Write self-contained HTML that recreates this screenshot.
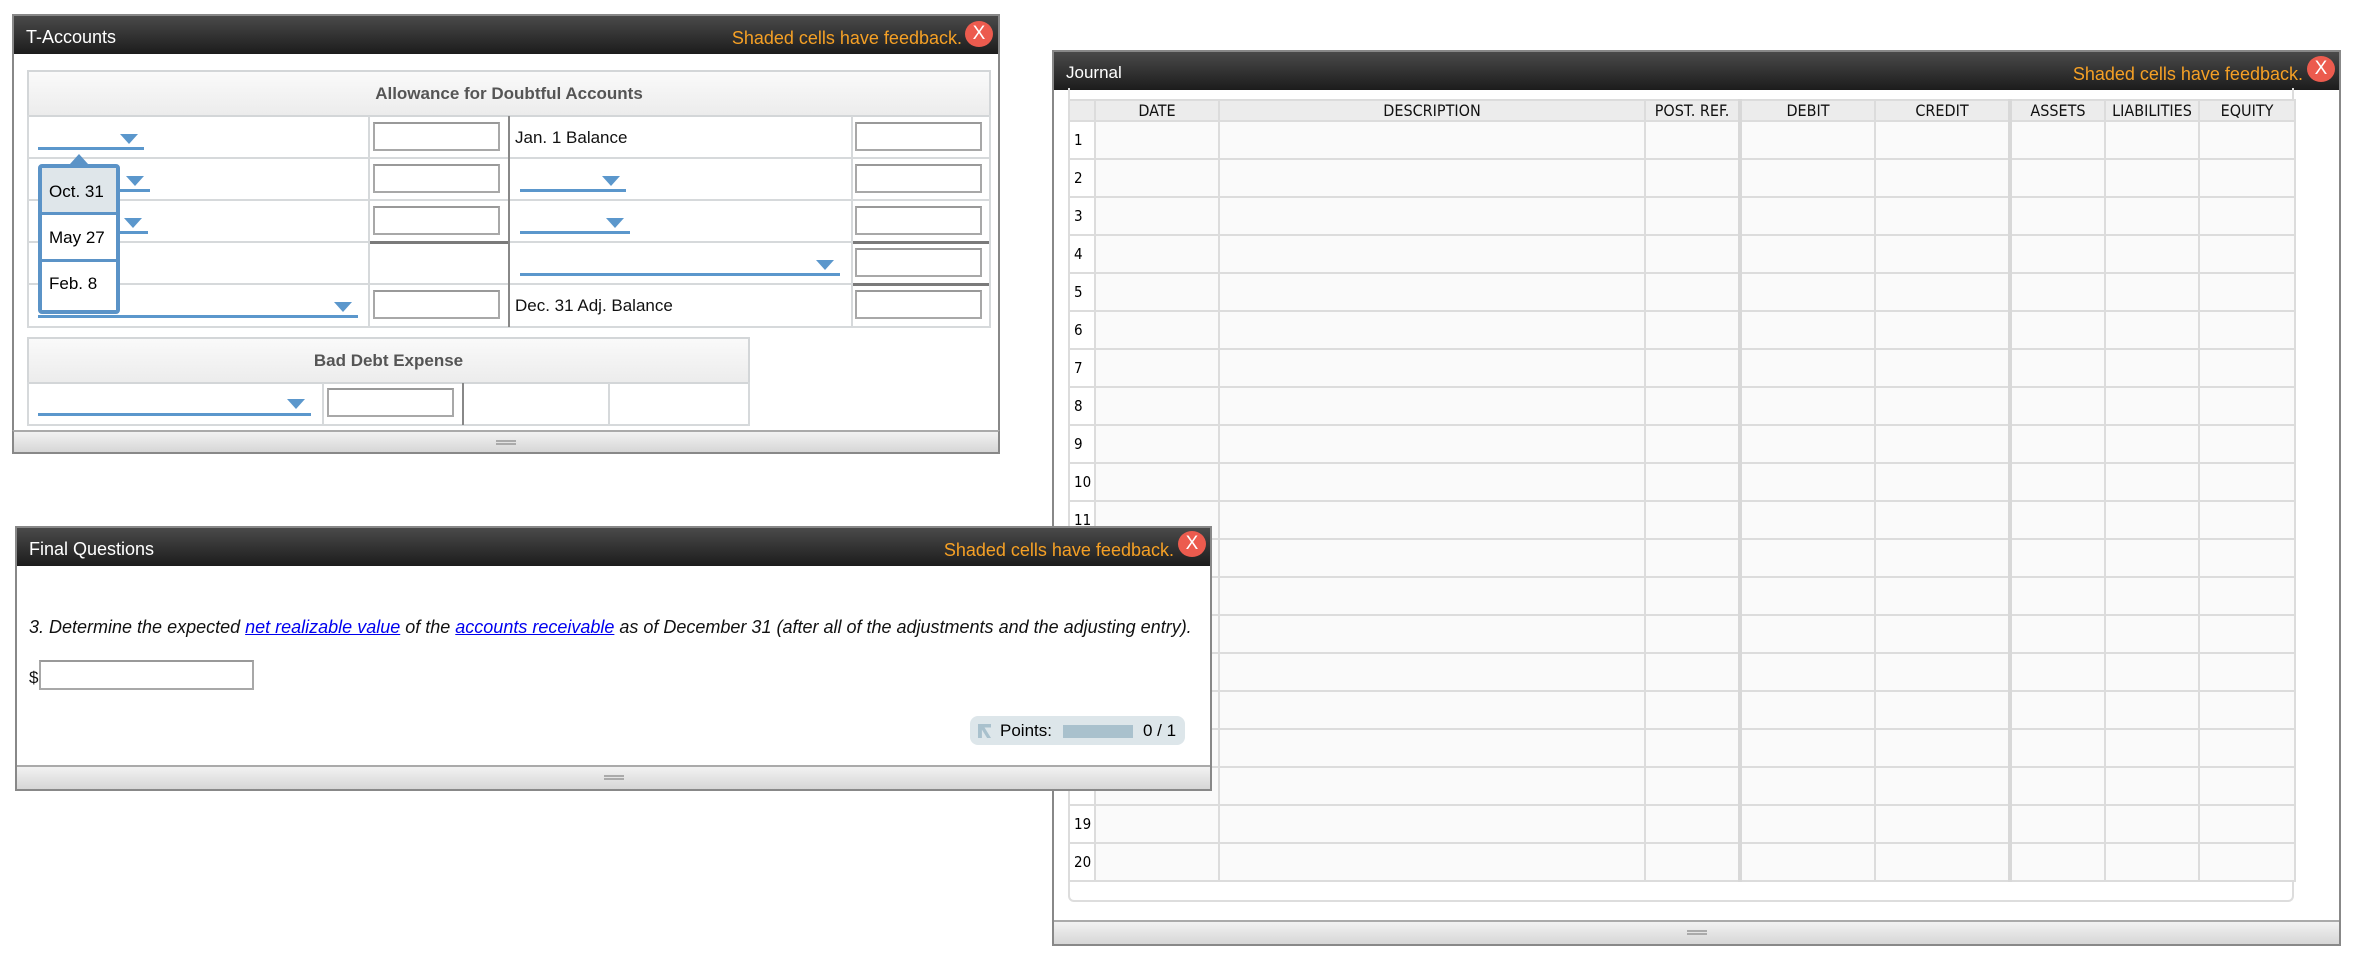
<!DOCTYPE html>
<html><head><meta charset="utf-8"><style>
*{box-sizing:border-box;margin:0;padding:0}
body{width:2356px;height:980px;background:#fff;position:relative;overflow:hidden;font-family:"Liberation Sans",Arial,sans-serif}
.win{position:absolute;background:#fff;border:2px solid #888}
.hdr{position:absolute;left:0;right:0;top:0;background:linear-gradient(#4a4a4a,#1c1c1c);color:#fff}
.hdr .t{position:absolute;left:12px;font-size:18px}
.hdr .fb{position:absolute;color:#f5a025;font-size:18px}
.x{position:absolute;width:28px;height:26px;border-radius:50%;background:#ec5b4e;color:#fff;font-size:19px;text-align:center;line-height:26px}
.ftr{position:absolute;left:0;right:0;bottom:0;background:linear-gradient(#f2f2f2,#d6d6d6);border-top:2px solid #aaa}
.grip{position:absolute;left:50%;width:20px;margin-left:-10px;height:5px;border-top:2px solid #aaa;border-bottom:2px solid #aaa}
.abs{position:absolute}
.inp{position:absolute;border:2px solid #a8a8a8;border-top-color:#999;background:#fff;height:29px}
.dd{position:absolute;height:3px;background:#5b97cc}
.arr{position:absolute;width:0;height:0;border-left:9px solid transparent;border-right:9px solid transparent;border-top:10px solid #5b97cc}
.cell{position:absolute;border:2px solid #d6d9db}
.th{position:absolute;background:linear-gradient(#fafafa,#ececec);border:2px solid #d3d6d8;color:#555;font-weight:bold;font-size:17px;text-align:center}
.txt{position:absolute;font-size:17px;color:#111}
table.j{position:absolute;border-collapse:collapse;font-family:"DejaVu Sans Condensed","Liberation Sans Narrow",sans-serif;font-size:15px;table-layout:fixed}
table.j td{border:2px solid #dcdcdc;background:#fafafa;height:38px;padding:0}
table.j tr.h td{background:#ececec;height:21px;text-align:center;color:#111;font-size:16px;line-height:17px}
table.j td.n{background:#fff;font-size:15px;padding-left:4px}
table.j td.tk{border-left:4px solid #d8d8d8}
</style></head><body>

<!-- Journal -->
<div class="win" style="left:1052px;top:50px;width:1289px;height:896px">
 <div class="hdr" style="height:38px"><span class="t" style="top:11px;font-size:17px">Journal</span><span class="fb" style="right:36px;top:12px">Shaded cells have feedback.</span><div class="x" style="right:4px;top:4px">X</div></div>
 <div class="abs" style="left:14px;top:36px;width:1226px;height:814px;border:2px solid #ddd;border-top:none;border-radius:0 0 6px 6px"></div>
 <table class="j" style="left:14px;top:47px;width:1226px">
  <colgroup><col style="width:26px"><col style="width:124px"><col style="width:426px"><col style="width:95px"><col style="width:135px"><col style="width:135px"><col style="width:95px"><col style="width:94px"><col style="width:96px"></colgroup>
  <tr class="h"><td></td><td>DATE</td><td>DESCRIPTION</td><td>POST. REF.</td><td class="tk">DEBIT</td><td>CREDIT</td><td class="tk">ASSETS</td><td>LIABILITIES</td><td>EQUITY</td></tr>
  <tr><td class="n">1</td><td></td><td></td><td></td><td class="tk"></td><td></td><td class="tk"></td><td></td><td></td></tr>
  <tr><td class="n">2</td><td></td><td></td><td></td><td class="tk"></td><td></td><td class="tk"></td><td></td><td></td></tr>
  <tr><td class="n">3</td><td></td><td></td><td></td><td class="tk"></td><td></td><td class="tk"></td><td></td><td></td></tr>
  <tr><td class="n">4</td><td></td><td></td><td></td><td class="tk"></td><td></td><td class="tk"></td><td></td><td></td></tr>
  <tr><td class="n">5</td><td></td><td></td><td></td><td class="tk"></td><td></td><td class="tk"></td><td></td><td></td></tr>
  <tr><td class="n">6</td><td></td><td></td><td></td><td class="tk"></td><td></td><td class="tk"></td><td></td><td></td></tr>
  <tr><td class="n">7</td><td></td><td></td><td></td><td class="tk"></td><td></td><td class="tk"></td><td></td><td></td></tr>
  <tr><td class="n">8</td><td></td><td></td><td></td><td class="tk"></td><td></td><td class="tk"></td><td></td><td></td></tr>
  <tr><td class="n">9</td><td></td><td></td><td></td><td class="tk"></td><td></td><td class="tk"></td><td></td><td></td></tr>
  <tr><td class="n">10</td><td></td><td></td><td></td><td class="tk"></td><td></td><td class="tk"></td><td></td><td></td></tr>
  <tr><td class="n">11</td><td></td><td></td><td></td><td class="tk"></td><td></td><td class="tk"></td><td></td><td></td></tr>
  <tr><td class="n">12</td><td></td><td></td><td></td><td class="tk"></td><td></td><td class="tk"></td><td></td><td></td></tr>
  <tr><td class="n">13</td><td></td><td></td><td></td><td class="tk"></td><td></td><td class="tk"></td><td></td><td></td></tr>
  <tr><td class="n">14</td><td></td><td></td><td></td><td class="tk"></td><td></td><td class="tk"></td><td></td><td></td></tr>
  <tr><td class="n">15</td><td></td><td></td><td></td><td class="tk"></td><td></td><td class="tk"></td><td></td><td></td></tr>
  <tr><td class="n">16</td><td></td><td></td><td></td><td class="tk"></td><td></td><td class="tk"></td><td></td><td></td></tr>
  <tr><td class="n">17</td><td></td><td></td><td></td><td class="tk"></td><td></td><td class="tk"></td><td></td><td></td></tr>
  <tr><td class="n">18</td><td></td><td></td><td></td><td class="tk"></td><td></td><td class="tk"></td><td></td><td></td></tr>
  <tr><td class="n">19</td><td></td><td></td><td></td><td class="tk"></td><td></td><td class="tk"></td><td></td><td></td></tr>
  <tr><td class="n">20</td><td></td><td></td><td></td><td class="tk"></td><td></td><td class="tk"></td><td></td><td></td></tr>
 </table>
 <div class="ftr" style="height:24px"><div class="grip" style="top:8px"></div></div>
</div>

<!-- T-Accounts -->
<div class="win" style="left:12px;top:14px;width:988px;height:440px">
 <div class="hdr" style="height:38px"><span class="t" style="top:11px">T-Accounts</span><span class="fb" style="right:36px;top:12px">Shaded cells have feedback.</span><div class="x" style="right:5px;top:5px">X</div></div>
</div>
<div class="th" style="left:27px;top:70px;width:964px;height:47px;line-height:43px">Allowance for Doubtful Accounts</div>
<div class="cell" style="left:27px;top:115px;width:964px;height:213px;border-top:none"></div>
<div class="abs" style="left:29px;top:157px;width:960px;height:2px;background:#d6d9db"></div>
<div class="abs" style="left:29px;top:199px;width:960px;height:2px;background:#d6d9db"></div>
<div class="abs" style="left:29px;top:241px;width:960px;height:2px;background:#d6d9db"></div>
<div class="abs" style="left:29px;top:283px;width:960px;height:2px;background:#d6d9db"></div>
<div class="abs" style="left:368px;top:116px;width:2px;height:211px;background:#d6d9db"></div>
<div class="abs" style="left:508px;top:116px;width:2px;height:211px;background:#888"></div>
<div class="abs" style="left:851px;top:116px;width:2px;height:211px;background:#d6d9db"></div>
<div class="abs" style="left:370px;top:241px;width:138px;height:3px;background:#7a7a7a"></div>
<div class="abs" style="left:853px;top:241px;width:136px;height:3px;background:#7a7a7a"></div>
<div class="abs" style="left:853px;top:283px;width:136px;height:3px;background:#7a7a7a"></div>
<div class="inp" style="left:373px;top:122px;width:127px"></div>
<div class="inp" style="left:373px;top:164px;width:127px"></div>
<div class="inp" style="left:373px;top:206px;width:127px"></div>
<div class="inp" style="left:373px;top:290px;width:127px"></div>
<div class="inp" style="left:855px;top:122px;width:127px"></div>
<div class="inp" style="left:855px;top:164px;width:127px"></div>
<div class="inp" style="left:855px;top:206px;width:127px"></div>
<div class="inp" style="left:855px;top:248px;width:127px"></div>
<div class="inp" style="left:855px;top:290px;width:127px"></div>
<div class="txt" style="left:515px;top:128px">Jan. 1 Balance</div>
<div class="txt" style="left:515px;top:296px">Dec. 31 Adj. Balance</div>
<div class="dd" style="left:38px;top:147px;width:106px"></div><div class="arr" style="left:120px;top:134px"></div>
<div class="dd" style="left:110px;top:189px;width:40px"></div><div class="arr" style="left:126px;top:176px"></div>
<div class="dd" style="left:110px;top:231px;width:38px"></div><div class="arr" style="left:124px;top:218px"></div>
<div class="dd" style="left:38px;top:315px;width:320px"></div><div class="arr" style="left:334px;top:302px"></div>
<div class="dd" style="left:520px;top:189px;width:106px"></div><div class="arr" style="left:602px;top:176px"></div>
<div class="dd" style="left:520px;top:231px;width:110px"></div><div class="arr" style="left:606px;top:218px"></div>
<div class="dd" style="left:520px;top:273px;width:320px"></div><div class="arr" style="left:816px;top:260px"></div>
<div class="abs" style="left:70px;top:154px;width:0;height:0;border-left:9px solid transparent;border-right:9px solid transparent;border-bottom:10px solid #5b93c7"></div>
<div class="abs" style="left:38px;top:164px;width:82px;height:150px;border:4px solid #5b93c7;border-radius:4px;background:#fff">
 <div style="height:47px;background:#dfe6ea;border-bottom:3px solid #5b93c7;font-size:17px;padding:14px 0 0 7px">Oct. 31</div>
 <div style="height:47px;border-bottom:3px solid #5b93c7;font-size:17px;padding:13px 0 0 7px">May 27</div>
 <div style="font-size:17px;padding:12px 0 0 7px">Feb. 8</div>
</div>
<div class="th" style="left:27px;top:337px;width:723px;height:47px;line-height:43px">Bad Debt Expense</div>
<div class="cell" style="left:27px;top:382px;width:723px;height:44px;border-top:none"></div>
<div class="abs" style="left:322px;top:383px;width:2px;height:42px;background:#d6d9db"></div>
<div class="abs" style="left:462px;top:383px;width:2px;height:42px;background:#888"></div>
<div class="abs" style="left:608px;top:383px;width:2px;height:42px;background:#d6d9db"></div>
<div class="inp" style="left:327px;top:388px;width:127px"></div>
<div class="dd" style="left:38px;top:413px;width:273px"></div><div class="arr" style="left:287px;top:399px"></div>
<div class="ftr" style="left:12px;top:430px;width:988px;height:24px;border-left:2px solid #888;border-right:2px solid #888;border-bottom:2px solid #888"><div class="grip" style="top:8px"></div></div>

<!-- Final Questions -->
<div class="win" style="left:15px;top:526px;width:1197px;height:265px">
 <div class="hdr" style="height:38px"><span class="t" style="top:11px">Final Questions</span><span class="fb" style="right:36px;top:12px">Shaded cells have feedback.</span><div class="x" style="right:4px;top:3px">X</div></div>
 <div class="txt" style="left:12px;top:89px;font-style:italic;font-size:18px">3. Determine the expected <u style="color:#0000ee">net realizable value</u> of the <u style="color:#0000ee">accounts receivable</u> as of December 31 (after all of the adjustments and the adjusting entry).</div>
 <div class="txt" style="left:12px;top:140px">$</div>
 <div class="inp" style="left:22px;top:132px;width:215px;height:30px"></div>
 <div class="abs" style="left:953px;top:188px;width:215px;height:29px;background:#dde6ea;border-radius:8px;font-size:17px">
  <span style="position:absolute;left:8px;top:8px;width:13px;height:14px;background:#a9c1cd;clip-path:polygon(0 0,100% 0,100% 25%,50% 25%,100% 100%,70% 100%,30% 40%,30% 100%,0 100%)"></span>
  <span style="position:absolute;left:30px;top:5px">Points:</span>
  <span style="position:absolute;left:93px;top:9px;width:70px;height:13px;background:#a9c1cd"></span>
  <span style="position:absolute;left:173px;top:5px">0 / 1</span>
 </div>
 <div class="ftr" style="height:24px"><div class="grip" style="top:8px"></div></div>
</div>
</body></html>
